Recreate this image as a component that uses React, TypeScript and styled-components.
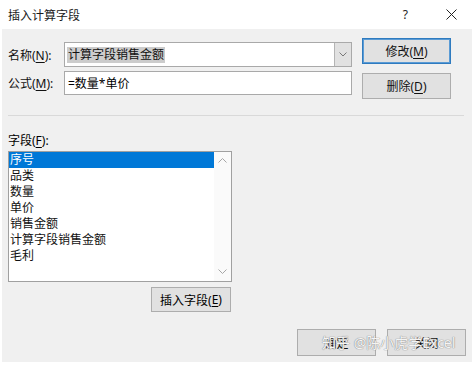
import React from "react"
import styled, { createGlobalStyle } from "styled-components"

const FONT = `"Noto Sans", "Noto Sans CJK SC", sans-serif`

const fields = ["序号", "品类", "数量", "单价", "销售金额", "计算字段销售金额", "毛利"]

const GlobalStyle = createGlobalStyle`
  html, body {
    margin: 0;
    padding: 0;
    background: #ffffff;
  }
  body {
    font-family: ${FONT};
    font-size: 12px;
    color: #000;
  }
`

const App: React.FC = () => {
  return (
    <Window>
      <GlobalStyle />
      <TitleBar>
        <Title>插入计算字段</Title>
        <TitleActions>
          <Help>?</Help>
          <svg width="11" height="11" viewBox="0 0 11 11">
            <path d="M0.5 0.5 L10.5 10.5 M10.5 0.5 L0.5 10.5" stroke="#222" strokeWidth="1" fill="none" />
          </svg>
        </TitleActions>
      </TitleBar>

      <Body>
        <TopSection>
          <Form>
            <FormRow>
              <Label>名称(<u>N</u>):</Label>
              <Combo>
                <ComboText><Selected>计算字段销售金额</Selected></ComboText>
                <DropButton>
                  <svg width="8" height="5" viewBox="0 0 8 5">
                    <path d="M0.5 0.5 L4 4 L7.5 0.5" stroke="#777" strokeWidth="1" fill="none" />
                  </svg>
                </DropButton>
              </Combo>
            </FormRow>
            <FormRow>
              <Label>公式(<u>M</u>):</Label>
              <TextBox>=数量*单价</TextBox>
            </FormRow>
          </Form>
          <SideButtons>
            <Button $primary>修改(<u>M</u>)</Button>
            <Button>删除(<u>D</u>)</Button>
          </SideButtons>
        </TopSection>

        <Separator />

        <FieldSection>
          <FieldLabel>字段(<u>F</u>):</FieldLabel>
          <ListBox>
            <Items>
              {fields.map((f, i) => (
                <Item key={f} $active={i === 0}>{f}</Item>
              ))}
            </Items>
            <ScrollBar>
              <svg width="9" height="5" viewBox="0 0 9 5">
                <path d="M0.5 4.5 L4.5 0.5 L8.5 4.5" stroke="#a6a6a6" strokeWidth="1" fill="none" />
              </svg>
              <svg width="9" height="5" viewBox="0 0 9 5">
                <path d="M0.5 0.5 L4.5 4.5 L8.5 0.5" stroke="#a6a6a6" strokeWidth="1" fill="none" />
              </svg>
            </ScrollBar>
          </ListBox>
          <InsertButton>插入字段(<u>E</u>)</InsertButton>
        </FieldSection>

        <Footer>
          <FooterButton>确定</FooterButton>
          <FooterButton>关闭</FooterButton>
          <Watermark>知乎 @陈小虎学Excel</Watermark>
        </Footer>
      </Body>
      <BottomEdge />
    </Window>
  )
}

export default App

const Window = styled.div`
  width: 474px;
  height: 366px;
  display: flex;
  flex-direction: column;
  background: #ffffff;
  overflow: hidden;
  font-family: ${FONT};
  font-size: 12px;

  u {
    text-decoration: underline;
    text-underline-offset: 2px;
  }
`

const TitleBar = styled.div`
  height: 29px;
  display: flex;
  align-items: center;
  justify-content: space-between;
  padding: 0 17px 0 8px;
  background: #ffffff;
`

const Title = styled.div`
  font-size: 12px;
  color: #1a1a1a;
  margin-top: 1px;
`

const TitleActions = styled.div`
  display: flex;
  align-items: center;
  gap: 38px;
`

const Help = styled.span`
  font-size: 12px;
  color: #222;
`

const Body = styled.div`
  flex: 1;
  display: flex;
  flex-direction: column;
  background: #f0f0f0;
  margin: 0 2px;
`

const TopSection = styled.div`
  display: flex;
  padding: 9px 0 0 6px;
`

const Form = styled.div`
  display: flex;
  flex-direction: column;
  gap: 4px;
  margin-top: 4px;
`

const FormRow = styled.div`
  display: flex;
  align-items: center;
`

const Label = styled.div`
  width: 56px;
  font-size: 12px;
  color: #111;
`

const Combo = styled.div`
  width: 288px;
  height: 25px;
  box-sizing: border-box;
  border: 1px solid #a9a9a9;
  background: #ffffff;
  display: flex;
  align-items: stretch;
`

const ComboText = styled.div`
  flex: 1;
  display: flex;
  align-items: center;
  padding-left: 2px;
`

const Selected = styled.span`
  background: #cccccc;
  color: #111;
  font-size: 12px;
  line-height: 16px;
  padding: 0 1px;
`

const DropButton = styled.div`
  width: 16px;
  background: #e1e1e1;
  border-left: 1px solid #b4b4b4;
  display: flex;
  align-items: center;
  justify-content: center;
`

const TextBox = styled.div`
  width: 288px;
  height: 24px;
  box-sizing: border-box;
  border: 1px solid #a9a9a9;
  background: #ffffff;
  display: flex;
  align-items: center;
  padding-left: 3px;
  font-size: 12px;
`

const SideButtons = styled.div`
  display: flex;
  flex-direction: column;
  gap: 9px;
  margin-left: 10px;
`

const Button = styled.div<{ $primary?: boolean }>`
  width: 89px;
  height: 26px;
  box-sizing: border-box;
  border: 1px solid ${p => (p.$primary ? "#2f7bbf" : "#adadad")};
  box-shadow: ${p => (p.$primary ? "inset 0 0 0 1px #5a9bd5" : "none")};
  background: #e1e1e1;
  display: flex;
  align-items: center;
  justify-content: center;
  font-size: 12px;
  color: #111;
`

const Separator = styled.div`
  height: 1px;
  background: #d9d9d9;
  margin: 16px 8px 0 6px;
`

const FieldSection = styled.div`
  display: flex;
  flex-direction: column;
  align-items: flex-end;
  width: 224px;
  margin-left: 6px;
`

const FieldLabel = styled.div`
  align-self: flex-start;
  line-height: 16px;
  margin-top: 17px;
  font-size: 12px;
`

const ListBox = styled.div`
  width: 224px;
  height: 131px;
  margin-top: 2px;
  box-sizing: border-box;
  border: 1px solid #a0a0a0;
  background: #ffffff;
  display: flex;
`

const Items = styled.div`
  flex: 1;
  display: flex;
  flex-direction: column;
`

const Item = styled.div<{ $active?: boolean }>`
  height: 16px;
  line-height: 16px;
  padding-left: 1px;
  font-size: 12px;
  background: ${p => (p.$active ? "#0078d7" : "transparent")};
  color: ${p => (p.$active ? "#ffffff" : "#111")};
`

const ScrollBar = styled.div`
  width: 17px;
  background: #fafafa;
  display: flex;
  flex-direction: column;
  align-items: center;
  justify-content: space-between;
  padding: 6px 0 7px;
`

const InsertButton = styled.div`
  width: 80px;
  height: 25px;
  margin: 5px 1px 0 0;
  box-sizing: border-box;
  border: 1px solid #adadad;
  background: #e1e1e1;
  display: flex;
  align-items: center;
  justify-content: center;
  font-size: 12px;
`

const Footer = styled.div`
  position: relative;
  display: flex;
  justify-content: flex-end;
  gap: 11px;
  padding: 17px 6px 0 0;
`

const FooterButton = styled.div`
  width: 79px;
  height: 27px;
  box-sizing: border-box;
  border: 1px solid #adadad;
  background: #e1e1e1;
  display: flex;
  align-items: center;
  justify-content: center;
  font-size: 12px;
  color: #111;
`

const Watermark = styled.div`
  position: absolute;
  left: 320px;
  top: 21px;
  font-size: 14px;
  line-height: 20px;
  color: rgba(255, 255, 255, 0.92);
  text-shadow: 0 0 1px #8a8a8a, 0 0 1px #8a8a8a;
  white-space: nowrap;
`

const BottomEdge = styled.div`
  height: 4px;
  background: #ffffff;
`
